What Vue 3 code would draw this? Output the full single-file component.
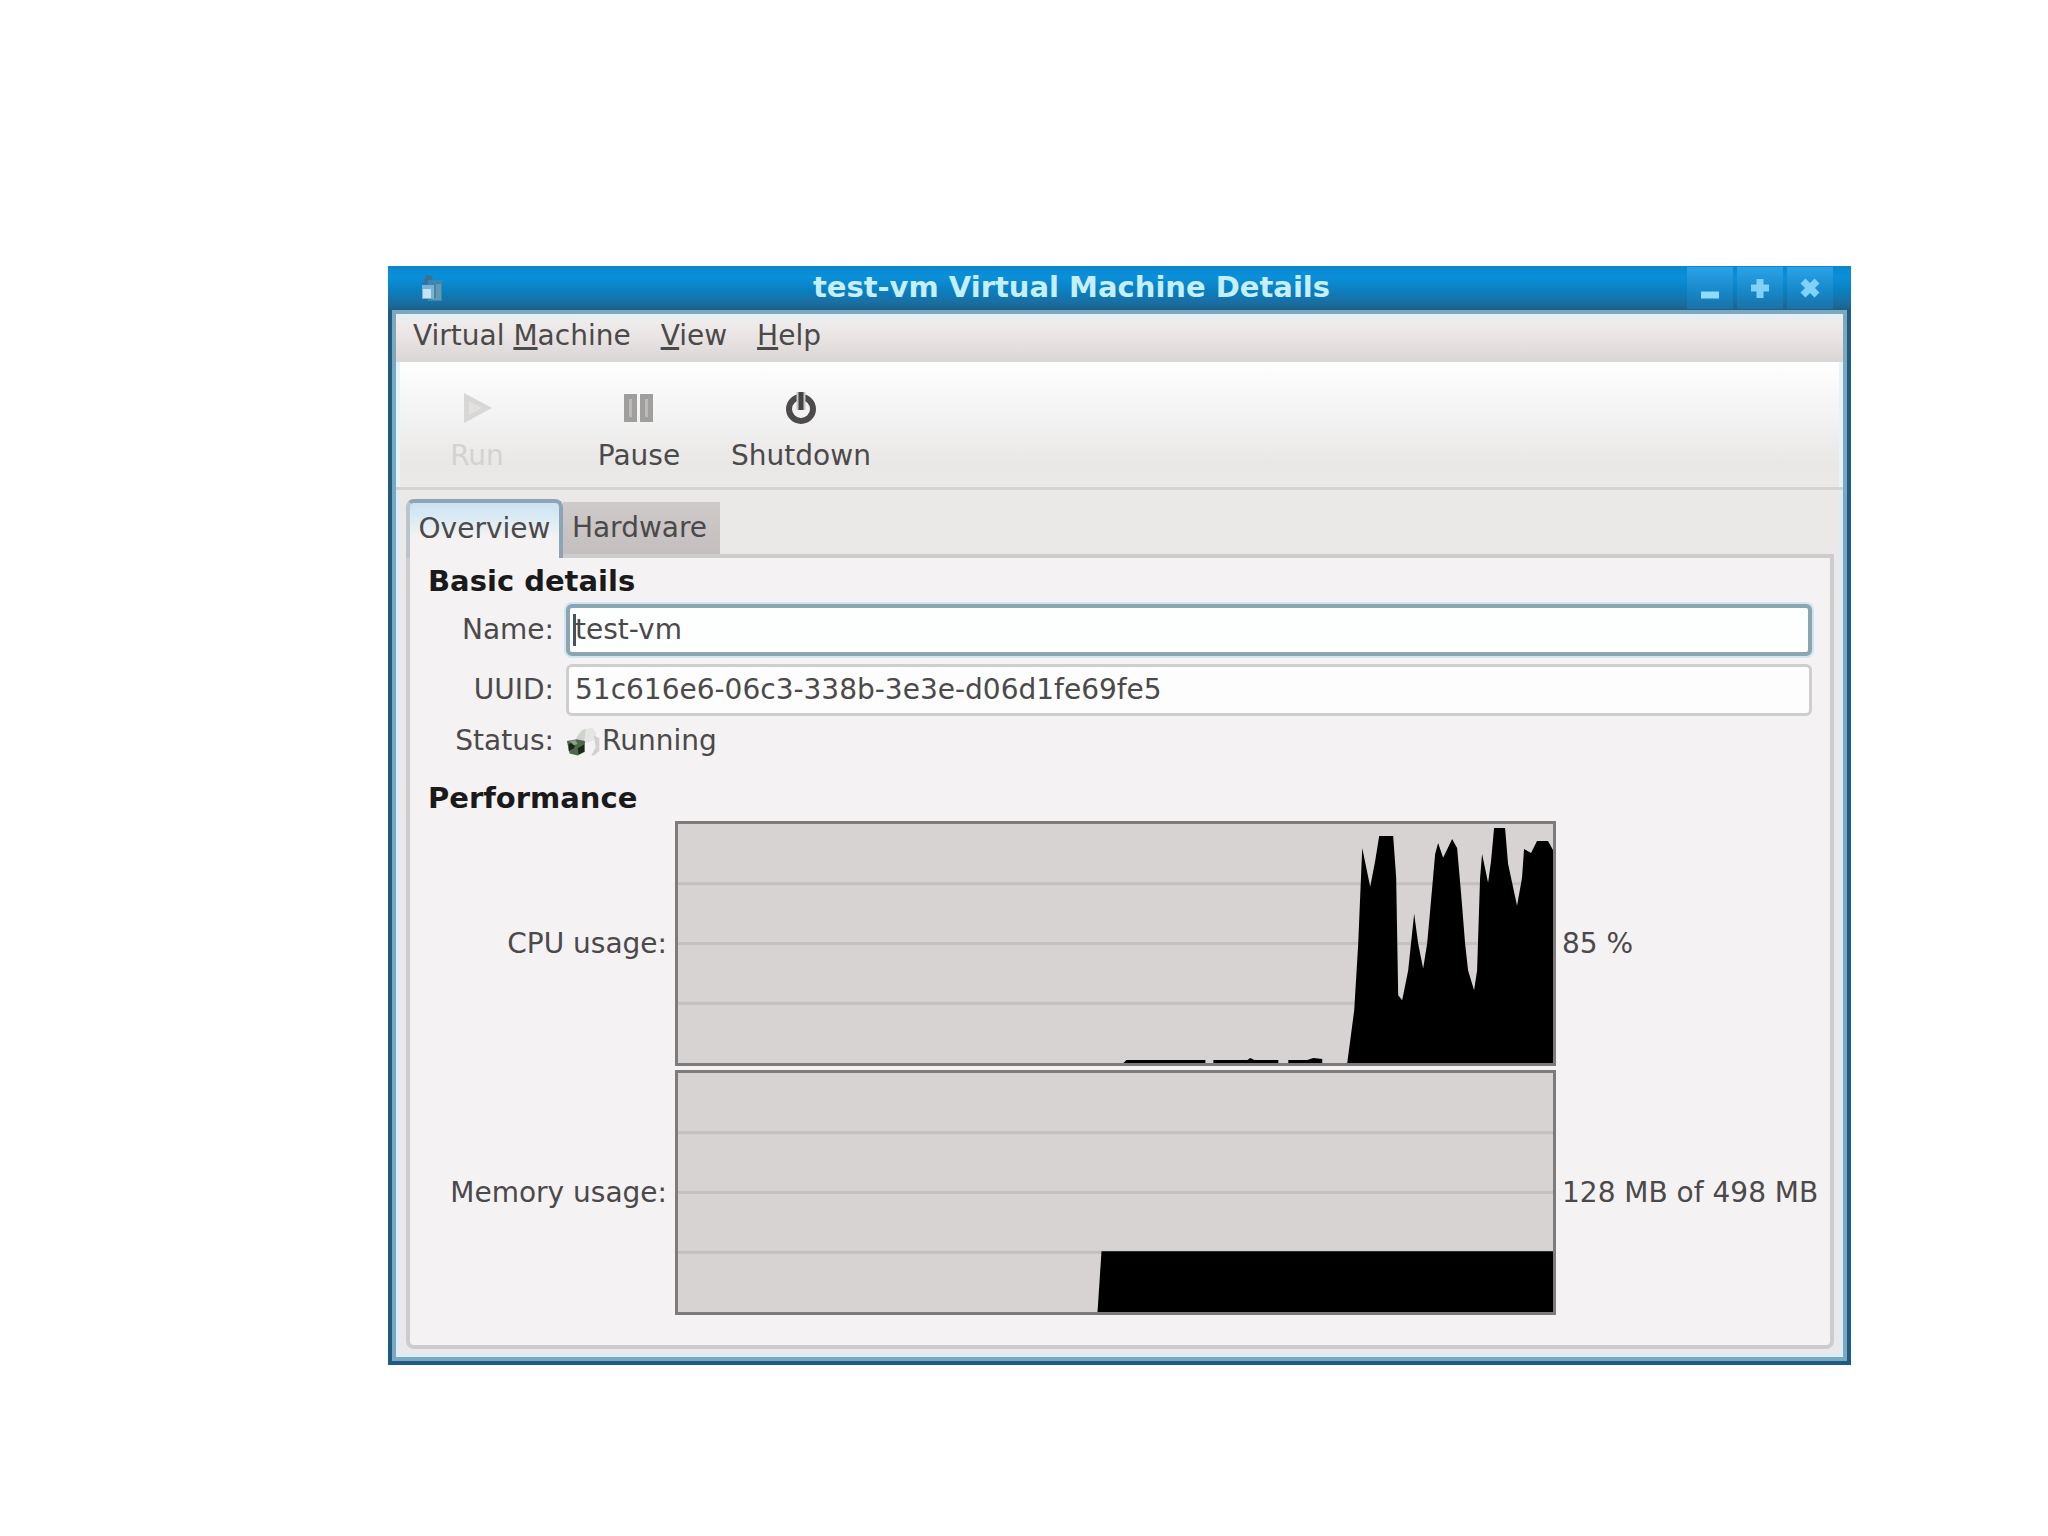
<template>
  <main class="page">
    <section class="window">
      <header class="titlebar">
        <svg class="app-icon" viewBox="0 0 28 32" aria-hidden="true">
          <path d="M7 12 L10 3 L16 4 L17 12 Z" fill="#3d6f94" />
          <rect x="12" y="8" width="14" height="21" fill="#3a87b0" />
          <path d="M6 13 H18 V27 H6 Z" fill="#7fb0d2" />
          <path d="M7 17 H15 V26 H7 Z" fill="#c3e4f7" />
          <path d="M20 12 H25 V28 H16 L20 25 Z" fill="#6399ad" />
        </svg>
        <h1>{{ vm.name }} Virtual Machine Details</h1>
        <div class="window-buttons">
          <button type="button" aria-label="Minimize">
            <svg viewBox="0 0 46 42"><path d="M14 28 H32" stroke="#8fdcff" stroke-width="7" /></svg>
          </button>
          <button type="button" aria-label="Maximize">
            <svg viewBox="0 0 46 42">
              <path d="M14 21 H32 M23 12 V31" stroke="#7fd2fb" stroke-width="7" />
            </svg>
          </button>
          <button type="button" aria-label="Close">
            <svg viewBox="0 0 46 42">
              <path d="M16 14 L30 28 M30 14 L16 28" stroke="#7fd2fb" stroke-width="7" />
            </svg>
          </button>
        </div>
      </header>

      <div class="content">
        <nav class="menubar">
          <button type="button"><span>Virtual <u>M</u>achine</span></button>
          <button type="button"><span><u>V</u>iew</span></button>
          <button type="button"><span><u>H</u>elp</span></button>
        </nav>

        <div class="toolbar">
          <button type="button" disabled>
            <svg viewBox="0 0 36 36" aria-hidden="true">
              <path d="M5 3 L33 18 L5 33 Z" fill="#d8d7d6" />
              <path d="M10 11 L23 18 L10 25 Z" fill="#e2e1e0" />
            </svg>
            <span>Run</span>
          </button>
          <button type="button">
            <svg viewBox="0 0 36 36" aria-hidden="true">
              <path d="M3 4 H16 V32 H3 Z M19 4 H32 V32 H19 Z" fill="#a09f9e" />
              <path d="M8 9 H11 V27 H8 Z M24 9 H27 V27 H24 Z" fill="#bcbbba" />
            </svg>
            <span>Pause</span>
          </button>
          <button type="button">
            <svg viewBox="0 0 36 36" aria-hidden="true">
              <circle cx="18" cy="19" r="12" fill="#f4f3f3" stroke="#4c4a4b" stroke-width="6" />
              <path d="M18 2 V20" stroke="#c9c8c8" stroke-width="9" />
              <path d="M18 2 V20" stroke="#454344" stroke-width="5" />
            </svg>
            <span>Shutdown</span>
          </button>
        </div>

        <div class="notebook">
          <div class="tabs" role="tablist">
            <button
              v-for="tab in tabs"
              :key="tab"
              type="button"
              role="tab"
              :aria-selected="tab === activeTab"
              :class="{ active: tab === activeTab }"
              @click="activeTab = tab"
            >
              {{ tab }}
            </button>
          </div>

          <div class="panel">
            <h2>Basic details</h2>
            <div class="details">
              <label for="vm-name">Name:</label>
              <div class="entry focused">
                <i class="caret"></i>
                <input id="vm-name" v-model="vm.name" type="text" />
              </div>
              <label for="vm-uuid">UUID:</label>
              <div class="entry">
                <input id="vm-uuid" :value="vm.uuid" type="text" readonly />
              </div>
              <span class="label">Status:</span>
              <div class="status">
                <svg viewBox="0 0 40 36" aria-hidden="true">
                  <path d="M17 6 L29 3 L34 9 L31 17 L20 21 Z" fill="#e3e6e2" />
                  <path d="M11 15 L17 7 L22 4 L20 19 Z" fill="#cdd5cc" />
                  <path d="M31 12 L37 15 V29 L31 34 H28 L33 25 Z" fill="#d2d1d1" />
                  <path d="M1 18 L12 16 L21 18 V30 L13 34 L4 32 Z" fill="#50674d" />
                  <path d="M3 21 L11 20 L9 26 L3 29 Z M13 26 L20 22 V30 L14 33 Z" fill="#182a17" />
                  <path d="M4 18 L10 17 L13 21 L9 23 Z" fill="#8da188" />
                </svg>
                <span>{{ vm.status }}</span>
              </div>
            </div>

            <h2 class="performance-title">Performance</h2>
            <div class="performance">
              <template v-for="graph in graphs" :key="graph.label">
                <span class="label">{{ graph.label }}</span>
                <svg
                  class="graph"
                  viewBox="0 0 876 240"
                  preserveAspectRatio="none"
                  role="img"
                  :aria-label="graph.label"
                >
                  <path
                    d="M0 60 H876 M0 120 H876 M0 180 H876"
                    stroke="#c3c0c0"
                    stroke-width="3"
                  />
                  <path :d="graph.area" fill="#000" />
                </svg>
                <span class="value">{{ graph.value }}</span>
              </template>
            </div>
          </div>
        </div>
      </div>
    </section>
  </main>
</template>

<script setup>
import { reactive, ref } from 'vue';

const vm = reactive({
  name: 'test-vm',
  uuid: '51c616e6-06c3-338b-3e3e-d06d1fe69fe5',
  status: 'Running'
});

const tabs = ['Overview', 'Hardware'];
const activeTab = ref('Overview');

// x, y pairs of the cpu curve, 0 is the top of the graph
const cpuPoints = [
  [670, 240], [677, 187], [681, 120], [685, 24], [693, 63], [698, 37], [702, 12],
  [716, 12], [719, 54], [721, 172], [725, 177], [731, 147], [737, 90], [741, 120],
  [746, 145], [750, 120], [753, 87], [758, 30], [761, 19], [766, 34], [775, 15],
  [780, 24], [784, 70], [788, 120], [791, 147], [797, 167], [800, 147], [803, 54],
  [805, 30], [811, 59], [814, 37], [817, 4], [828, 4], [831, 40], [840, 82],
  [845, 54], [847, 25], [854, 29], [860, 17], [871, 17], [876, 26], [876, 240]
];
const idle = 'M446 240 L449 237 H528 V240 Z M536 240 V237 H570 L573 235 L577 237 H601 V240 Z M611 240 V237 H630 L636 235 L645 236 V240 Z';

const graphs = [
  {
    label: 'CPU usage:',
    value: '85 %',
    area: 'M' + cpuPoints.map((p) => p.join(' ')).join(' L') + ' Z ' + idle
  },
  {
    label: 'Memory usage:',
    value: '128 MB of 498 MB',
    area: 'M420 240 L424 179 H876 V240 Z'
  }
];
</script>

<style>
body {
  margin: 0;
  background: #fff;
}
</style>

<style scoped>
.page {
  padding: 266px 197px 120px 388px;
  font-family: "DejaVu Sans", sans-serif;
  font-size: 28px;
  line-height: 32px;
  color: #4b494a;
}

.page * {
  box-sizing: border-box;
}

button,
input {
  padding: 0;
  border: 0;
  background: none;
  font: inherit;
  color: inherit;
}

h1,
h2 {
  margin: 0;
  font-size: 29px;
  font-weight: bold;
}

.window {
  border: 4px solid #1d5b82;
  border-top: 0;
  background: #1d5b82;
}

.titlebar {
  display: flex;
  align-items: center;
  height: 44px;
  margin: 0 -4px;
  padding: 0 18px 0 28px;
  background: linear-gradient(#0b86cb, #0a90da 25%, #0a80c0 55%, #1b6d9f 85%, #1c6089);
}

.app-icon {
  width: 28px;
  height: 32px;
}

.titlebar h1 {
  flex: 1;
  padding-left: 12px;
  padding-bottom: 2px;
  text-align: center;
  color: #c5effd;
}

.window-buttons {
  display: flex;
  gap: 4px;
}

.window-buttons button {
  width: 46px;
  height: 42px;
  background: linear-gradient(#2ba2e8, #1687c8 60%, #1c71a5);
}

.window-buttons svg {
  display: block;
  width: 46px;
  height: 42px;
}

.content {
  border: 4px solid #7ba7bf;
  background: #eae9e8;
}

.menubar {
  display: flex;
  gap: 30px;
  height: 48px;
  padding: 0 17px 4px;
  background: linear-gradient(#e4f0f8, #eeebea 20%, #e6e1e0 60%, #d8d6d6);
}

.menubar u {
  text-decoration-thickness: 3px;
  text-underline-offset: 2px;
}

.toolbar {
  display: flex;
  height: 128px;
  border-bottom: 3px solid #d4d3d2;
  background: linear-gradient(#fff, #f6f5f5 35%, #e9e8e7 80%, #eae9e8);
  box-shadow: inset 4px 0 #e6f3f9, inset -4px 0 #e6f3f9;
}

.toolbar button {
  display: flex;
  flex-direction: column;
  align-items: center;
  gap: 14px;
  width: 162px;
  padding-top: 28px;
}

.toolbar svg {
  width: 36px;
  height: 36px;
}

.toolbar button:disabled {
  color: #d3d2d1;
}

.notebook {
  padding: 9px 5px 4px 6px;
  border: 0 solid #dcedf5;
  border-width: 0 4px 4px;
}

.tabs {
  display: flex;
  align-items: flex-end;
}

.tabs button {
  width: 157px;
  height: 52px;
  padding-right: 4px;
  background: linear-gradient(#cfcaca, #c4bebe);
}

.tabs .active {
  position: relative;
  height: 59px;
  margin-bottom: -4px;
  padding-right: 0;
  padding-bottom: 4px;
  border: 4px solid #8ba5b5;
  border-left-color: #b9c5cc;
  border-bottom: 0;
  border-radius: 8px 8px 0 0;
  background: linear-gradient(#cbe2f0, #dcebf4 30%, #f4f2f3 60%);
}

.panel {
  padding: 7px 18px 30px;
  border: 4px solid #cdcccd;
  border-radius: 0 0 8px 8px;
  background: #f4f2f3;
}

h2 {
  color: #1b1a1b;
}

.details {
  display: grid;
  grid-template-columns: 126px 1fr;
  column-gap: 12px;
  row-gap: 8px;
  align-items: center;
  margin-top: 7px;
}

.details label,
.label {
  text-align: right;
}

.entry {
  position: relative;
  display: flex;
  height: 52px;
  border: 3px solid #cfcece;
  border-radius: 6px;
  background: #fdfdfd;
}

.entry input {
  flex: 1;
  min-width: 0;
  padding: 0 6px;
  outline: 0;
}

.entry.focused {
  border: 4px solid #8ba5b2;
  background: #fdffff;
  box-shadow: 0 0 0 2px #d2e5ee;
}

.entry.focused input {
  padding: 0 5px;
}

.caret {
  position: absolute;
  left: 3px;
  top: 6px;
  width: 3px;
  height: 32px;
  background: #44545c;
}

.status {
  display: flex;
  align-items: center;
  height: 34px;
}

.status svg {
  width: 36px;
  height: 34px;
}

.performance-title {
  margin-top: 24px;
}

.performance {
  display: grid;
  grid-template-columns: 241px 1fr 250px;
  column-gap: 6px;
  row-gap: 4px;
  align-items: center;
  margin-top: 7px;
}

.performance .label {
  padding-right: 2px;
}

.graph {
  display: block;
  width: 100%;
  height: 245px;
  border: 3px solid #7d7b7c;
  background: #d6d3d2;
}

.value {
  white-space: nowrap;
}
</style>
